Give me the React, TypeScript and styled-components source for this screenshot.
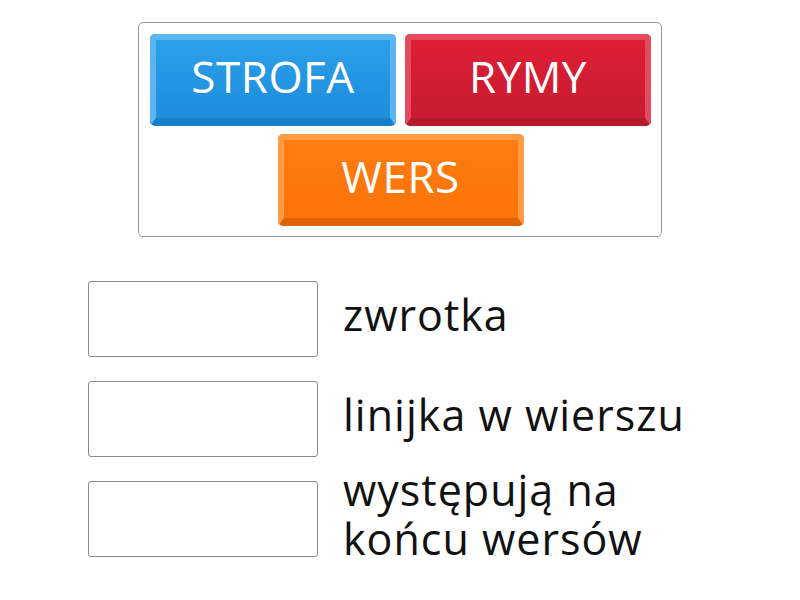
import React, { FC } from "react";
import styled, { createGlobalStyle } from "styled-components";

const GlobalStyle = createGlobalStyle`
  html, body {
    margin: 0;
    padding: 0;
    background: #fff;
  }
  body {
    font-family: "Open Sans", Lato, sans-serif;
  }
`;

type Tone = "blue" | "red" | "orange";

const tones: Record<Tone, { rim: string; face: string; faceEnd: string; shade: string }> = {
  blue: { rim: "#5ab6f2", face: "#2c9fea", faceEnd: "#1d8ddc", shade: "#1580c9" },
  red: { rim: "#e44b5e", face: "#dd1f36", faceEnd: "#c81b2f", shade: "#b41a2b" },
  orange: { rim: "#ff9a45", face: "#ff7d12", faceEnd: "#fb7306", shade: "#dd6305" },
};

const words: { label: string; tone: Tone }[] = [
  { label: "STROFA", tone: "blue" },
  { label: "RYMY", tone: "red" },
  { label: "WERS", tone: "orange" },
];

const definitions = ["zwrotka", "linijka w wierszu", "występują na końcu wersów"];

const Page = styled.div`
  width: 800px;
  height: 600px;
  display: flex;
  flex-direction: column;
  align-items: center;
  padding-top: 22px;
  box-sizing: border-box;
`;

const Bank = styled.div`
  width: 524px;
  box-sizing: border-box;
  border: 1px solid #9a9a9a;
  border-radius: 5px;
  padding: 11px 10px 10px 11px;
  display: flex;
  flex-wrap: wrap;
  justify-content: center;
  column-gap: 9px;
  row-gap: 8px;
`;

const Tile = styled.div<{ $tone: Tone }>`
  width: 246px;
  height: 92px;
  box-sizing: border-box;
  border-radius: 5px;
  border-style: solid;
  border-width: 6px 6px 8px 6px;
  border-color: ${(p) => tones[p.$tone].rim} ${(p) => tones[p.$tone].rim}
    ${(p) => tones[p.$tone].shade} ${(p) => tones[p.$tone].rim};
  background: linear-gradient(
    ${(p) => tones[p.$tone].face},
    ${(p) => tones[p.$tone].faceEnd}
  );
  display: flex;
  align-items: center;
  justify-content: center;
  color: #fff;
  font-size: 44px;
  letter-spacing: 0.5px;
  padding-bottom: 6px;
`;

const List = styled.div`
  width: 800px;
  margin-top: 44px;
  display: flex;
  flex-direction: column;
  gap: 24px;
  padding-left: 88px;
  box-sizing: border-box;
`;

const Row = styled.div`
  height: 76px;
  display: flex;
  align-items: center;
  gap: 25px;
`;

const Slot = styled.div`
  width: 230px;
  height: 76px;
  flex-shrink: 0;
  box-sizing: border-box;
  border: 1px solid #8a8a8a;
  border-radius: 3px;
  background: #fff;
`;

const Definition = styled.div`
  width: 360px;
  font-size: 43px;
  letter-spacing: 1px;
  line-height: 49px;
  color: #111;
  padding-bottom: 10px;
`;

const App: FC = () => (
  <>
    <GlobalStyle />
    <Page>
      <Bank>
        {words.map((w) => (
          <Tile key={w.label} $tone={w.tone}>
            {w.label}
          </Tile>
        ))}
      </Bank>
      <List>
        {definitions.map((d) => (
          <Row key={d}>
            <Slot />
            <Definition>{d}</Definition>
          </Row>
        ))}
      </List>
    </Page>
  </>
);

export default App;
